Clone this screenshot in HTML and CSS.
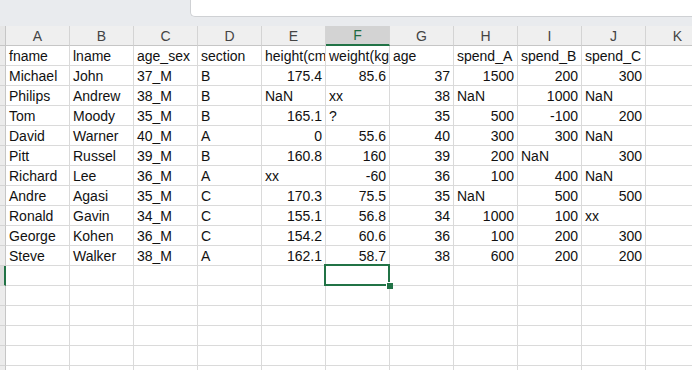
FILE: index.html
```html
<!DOCTYPE html>
<html lang="en">
<head>
  <meta charset="UTF-8" />
  <title>Sheet1</title>
  <link rel="stylesheet" href="styles.css">
</head>
<body>
  <div class="topbar">
    <div class="formula"></div>
  </div>

  <table class="sheet">
    <colgroup>
      <col class="rowhead-col">
      <col class="cell-col"><col class="cell-col"><col class="cell-col"><col class="cell-col">
      <col class="cell-col"><col class="cell-col"><col class="cell-col"><col class="cell-col">
      <col class="cell-col"><col class="cell-col"><col class="cell-col">
    </colgroup>
    <thead>
      <tr>
        <th class="corner"></th>
        <th>A</th><th>B</th><th>C</th><th>D</th><th>E</th>
        <th class="active">F</th>
        <th>G</th><th>H</th><th>I</th><th>J</th><th>K</th>
      </tr>
    </thead>
    <tbody>
      <tr><th></th><td>fname</td><td>lname</td><td>age_sex</td><td>section</td><td>height(cm)</td><td>weight(kg)</td><td>age</td><td>spend_A</td><td>spend_B</td><td>spend_C</td><td></td></tr>
      <tr><th></th><td>Michael</td><td>John</td><td>37_M</td><td>B</td><td class="n">175.4</td><td class="n">85.6</td><td class="n">37</td><td class="n">1500</td><td class="n">200</td><td class="n">300</td><td></td></tr>
      <tr><th></th><td>Philips</td><td>Andrew</td><td>38_M</td><td>B</td><td>NaN</td><td>xx</td><td class="n">38</td><td>NaN</td><td class="n">1000</td><td>NaN</td><td></td></tr>
      <tr><th></th><td>Tom</td><td>Moody</td><td>35_M</td><td>B</td><td class="n">165.1</td><td>?</td><td class="n">35</td><td class="n">500</td><td class="n">-100</td><td class="n">200</td><td></td></tr>
      <tr><th></th><td>David</td><td>Warner</td><td>40_M</td><td>A</td><td class="n">0</td><td class="n">55.6</td><td class="n">40</td><td class="n">300</td><td class="n">300</td><td>NaN</td><td></td></tr>
      <tr><th></th><td>Pitt</td><td>Russel</td><td>39_M</td><td>B</td><td class="n">160.8</td><td class="n">160</td><td class="n">39</td><td class="n">200</td><td>NaN</td><td class="n">300</td><td></td></tr>
      <tr><th></th><td>Richard</td><td>Lee</td><td>36_M</td><td>A</td><td>xx</td><td class="n">-60</td><td class="n">36</td><td class="n">100</td><td class="n">400</td><td>NaN</td><td></td></tr>
      <tr><th></th><td>Andre</td><td>Agasi</td><td>35_M</td><td>C</td><td class="n">170.3</td><td class="n">75.5</td><td class="n">35</td><td>NaN</td><td class="n">500</td><td class="n">500</td><td></td></tr>
      <tr><th></th><td>Ronald</td><td>Gavin</td><td>34_M</td><td>C</td><td class="n">155.1</td><td class="n">56.8</td><td class="n">34</td><td class="n">1000</td><td class="n">100</td><td>xx</td><td></td></tr>
      <tr><th></th><td>George</td><td>Kohen</td><td>36_M</td><td>C</td><td class="n">154.2</td><td class="n">60.6</td><td class="n">36</td><td class="n">100</td><td class="n">200</td><td class="n">300</td><td></td></tr>
      <tr><th></th><td>Steve</td><td>Walker</td><td>38_M</td><td>A</td><td class="n">162.1</td><td class="n">58.7</td><td class="n">38</td><td class="n">600</td><td class="n">200</td><td class="n">200</td><td></td></tr>
      <tr class="active-row"><th></th><td></td><td></td><td></td><td></td><td></td><td class="selected"></td><td></td><td></td><td></td><td></td><td></td></tr>
      <tr><th></th><td></td><td></td><td></td><td></td><td></td><td></td><td></td><td></td><td></td><td></td><td></td></tr>
      <tr><th></th><td></td><td></td><td></td><td></td><td></td><td></td><td></td><td></td><td></td><td></td><td></td></tr>
      <tr><th></th><td></td><td></td><td></td><td></td><td></td><td></td><td></td><td></td><td></td><td></td><td></td></tr>
      <tr><th></th><td></td><td></td><td></td><td></td><td></td><td></td><td></td><td></td><td></td><td></td><td></td></tr>
      <tr><th></th><td></td><td></td><td></td><td></td><td></td><td></td><td></td><td></td><td></td><td></td><td></td></tr>
    </tbody>
  </table>
</body>
</html>
```

FILE: styles.css
```css
html, body {
  margin: 0;
  padding: 0;
  overflow: hidden;
}
body {
  font-family: "Liberation Sans", Arial, sans-serif;
  background: #fff;
  width: 692px;
  height: 370px;
}
.topbar {
  height: 26px;
  background: #e9ebee;
  padding-left: 190px;
  box-sizing: border-box;
}
.formula {
  height: 17px;
  background: #fff;
  border: 1px solid #cfd1d4;
  border-top: none;
  border-right: none;
  border-bottom-left-radius: 5px;
  box-sizing: border-box;
}
.sheet {
  border-collapse: separate;
  border-spacing: 0;
  table-layout: fixed;
  width: 710px;
}
.rowhead-col {
  width: 6px;
}
.cell-col {
  width: 64px;
}
.sheet thead th {
  height: 20px;
  padding: 0;
  background: #efefef;
  border-right: 1px solid #d4d4d4;
  border-bottom: 1px solid #c6c6c6;
  font-weight: normal;
  font-size: 14px;
  color: #444;
  text-align: center;
  box-sizing: border-box;
}
.sheet thead th.corner {
  background: #e6e6e6;
  border-right: 1px solid #c6c6c6;
}
.sheet thead th.active {
  background: #d3d3d3;
  color: #1e6b41;
  border-bottom: 2px solid #217346;
}
.sheet tbody th {
  padding: 0;
  background: #ececec;
  border-right: 1px solid #c6c6c6;
  border-bottom: 1px solid #d4d4d4;
}
.sheet tbody tr.active-row th {
  border-right: 2px solid #217346;
  background: #dcdcdc;
}
.sheet td {
  height: 20px;
  padding: 1px 3px 0 3px;
  box-sizing: border-box;
  border-right: 1px solid #dadada;
  border-bottom: 1px solid #dadada;
  font-size: 14px;
  color: #111;
  white-space: nowrap;
  overflow: hidden;
  text-overflow: clip;
  line-height: 18px;
}
.sheet td.n {
  text-align: right;
}
.sheet td.selected {
  position: relative;
  overflow: visible;
}
.sheet td.selected::after {
  content: "";
  position: absolute;
  left: -2px;
  top: -2px;
  right: -1px;
  bottom: -1px;
  border: 2px solid #217346;
}
.sheet td.selected::before {
  content: "";
  position: absolute;
  right: -4px;
  bottom: -4px;
  width: 6px;
  height: 6px;
  background: #217346;
  border: 1px solid #fff;
  border-right: none;
  border-bottom: none;
  z-index: 2;
}
```
